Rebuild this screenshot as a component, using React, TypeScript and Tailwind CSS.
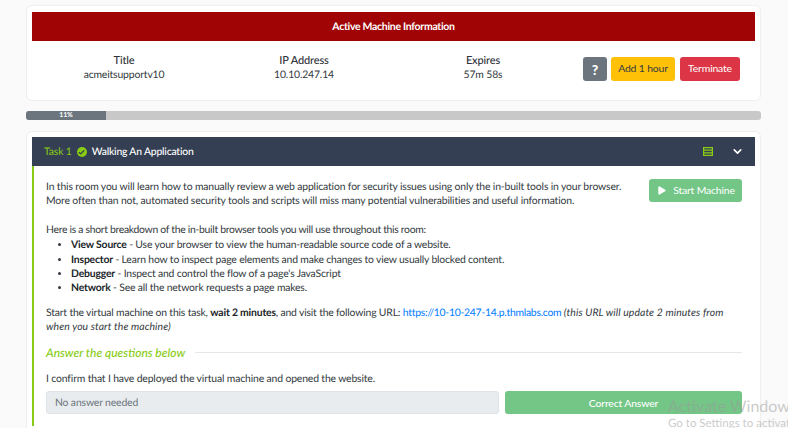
import { Check, ChevronDown, Play } from 'lucide-react'

const fields = [
  { label: 'Title', value: 'acmeitsupportv10', width: 'w-[184px]' },
  { label: 'IP Address', value: '10.10.247.14', width: 'w-[176px]' },
  { label: 'Expires', value: '57m 58s', width: 'w-[182px]' },
]

const tools = [
  { name: 'View Source', text: "Use your browser to view the human-readable source code of a website." },
  { name: 'Inspector', text: 'Learn how to inspect page elements and make changes to view usually blocked content.' },
  { name: 'Debugger', text: "Inspect and control the flow of a page's JavaScript" },
  { name: 'Network', text: 'See all the network requests a page makes.' },
]

export default function App() {
  return (
    <div className="relative h-[428px] w-[788px] overflow-hidden bg-[#fafafa] pl-[26px] pt-[5px] font-['Lato',sans-serif] text-[10.4px] tracking-[-0.15px] text-[#333a40] [text-rendering:geometricPrecision]">
      <div className="w-[735px]">
        {/* Machine info */}
        <section className="h-[96px] rounded-md border border-[#efefef] bg-white px-[5px] pt-[6px]">
          <h2 className="flex h-[29px] items-center justify-center bg-[#a10404] pt-[2px] text-[10.5px] font-bold tracking-[-0.3px] text-white">
            Active Machine Information
          </h2>
          <div className="flex items-start pt-[12px]">
            {fields.map((field) => (
              <div key={field.label} className={`${field.width} text-center leading-[15px]`}>
                <div className="text-[11px] font-medium text-[#2f343a]">{field.label}</div>
                <div>{field.value}</div>
              </div>
            ))}
            <div className="ml-[9px] flex gap-[4px] pt-[4px]">
              <button className="flex h-[24px] w-[24px] items-center justify-center rounded-[3px] bg-[#6c757d] text-[14px] font-black text-white">?</button>
              <button className="h-[24px] w-[64px] rounded-[3px] bg-[#ffc107] text-[#343a40]">Add 1 hour</button>
              <button className="ml-px h-[24px] w-[60px] rounded-[3px] bg-[#dc3545] text-white">Terminate</button>
            </div>
          </div>
        </section>

        {/* Progress */}
        <div className="mt-[10px] h-[9px] overflow-hidden rounded-[3px] bg-[#c8c8c8]">
          <div className="flex h-full w-[80px] items-center justify-center bg-[#6c757d] text-[7px] font-bold text-white">11%</div>
        </div>

        {/* Task */}
        <section className="mt-[11px] h-[300px] rounded-t-md border border-b-0 border-[#efefef] bg-white px-[5px] pt-[5px]">
          <div className="flex h-[29px] items-center justify-between bg-[#353f53] pl-[12px] pr-[11px]">
            <div className="flex items-center pt-[2px]">
              <span className="text-[#88cc14]">Task 1</span>
              <span className="ml-[5px] flex h-[10px] w-[10px] items-center justify-center rounded-full bg-[#88cc14]">
                <Check size={7} strokeWidth={4} className="text-[#353f53]" />
              </span>
              <span className="ml-[5px] font-medium tracking-[-0.2px] text-white">Walking An Application</span>
            </div>
            <div className="flex items-center gap-[18px]">
              <svg width="10" height="9" viewBox="0 0 10 9">
                <path d="M0 0h10v9H0z M1.2 1.2v1.4h7.6V1.2z M1.2 3.8v1.4h7.6V3.8z M1.2 6.4v1.4h7.6V6.4z" fill="#88cc14" fillRule="evenodd" />
              </svg>
              <ChevronDown size={13} strokeWidth={3} className="text-white" />
            </div>
          </div>

          <div className="h-[260px] border-l-2 border-[#88cc14] pl-[12px] pr-[13px] leading-[14.4px]">
            <div className="flex items-start justify-between">
              <p className="w-[590px] pt-[14px] tracking-[-0.15px]">
                In this room you will learn how to manually review a web application for security issues using only the in-built tools in your browser. More often than not, automated security tools and scripts will miss many potential vulnerabilities and useful information.
              </p>
              <button className="mt-[13px] flex h-[23px] w-[93px] items-center justify-center gap-[6px] rounded-[3px] bg-[#74c687] text-white">
                <Play size={11} fill="white" strokeWidth={0} />
                Start Machine
              </button>
            </div>

            <p className="mt-[14px] tracking-[-0.3px]">Here is a short breakdown of the in-built browser tools you will use throughout this room:</p>
            <ul className="mt-px pl-[25px] tracking-[-0.18px]">
              {tools.map((tool) => (
                <li key={tool.name} className="list-disc">
                  <b className="font-bold text-[#212529]">{tool.name}</b> - {tool.text}
                </li>
              ))}
            </ul>

            <p className="mt-[10px] tracking-[-0.18px]">
              Start the virtual machine on this task, <b className="font-bold text-[#212529]">wait 2 minutes</b>, and visit the following URL:{' '}
              <a className="tracking-[-0.26px] text-[#007bff]">https://10-10-247-14.p.thmlabs.com</a>{' '}
              <i className="tracking-[0.1px]">(this URL will update 2 minutes from when you start the machine)</i>
            </p>

            <div className="mt-[11px] flex items-center gap-[10px]">
              <span className="text-[12px] font-medium italic tracking-normal text-[#88cc14]">Answer the questions below</span>
              <div className="h-px flex-1 bg-[#e6e6e6]" />
            </div>

            <p className="mt-[12px]">I confirm that I have deployed the virtual machine and opened the website.</p>

            <div className="mt-[5px] flex gap-[6px]">
              <div className="flex h-[23px] w-[453px] items-center rounded-[3px] border border-[#dfe3e7] bg-[#e9ecef] pl-[8px] text-[#6c757d]">No answer needed</div>
              <button className="h-[23px] flex-1 rounded-[3px] bg-[#74c687] font-medium text-white">Correct Answer</button>
            </div>
          </div>
        </section>
      </div>

      {/* Windows watermark */}
      <div className="absolute left-[668px] top-[397px] whitespace-nowrap tracking-normal text-[#9a9a9a] opacity-50">
        <div className="text-[16px] leading-[19px]">Activate Windows</div>
        <div className="text-[11.5px] leading-[15px]">Go to Settings to activate</div>
      </div>
    </div>
  )
}
